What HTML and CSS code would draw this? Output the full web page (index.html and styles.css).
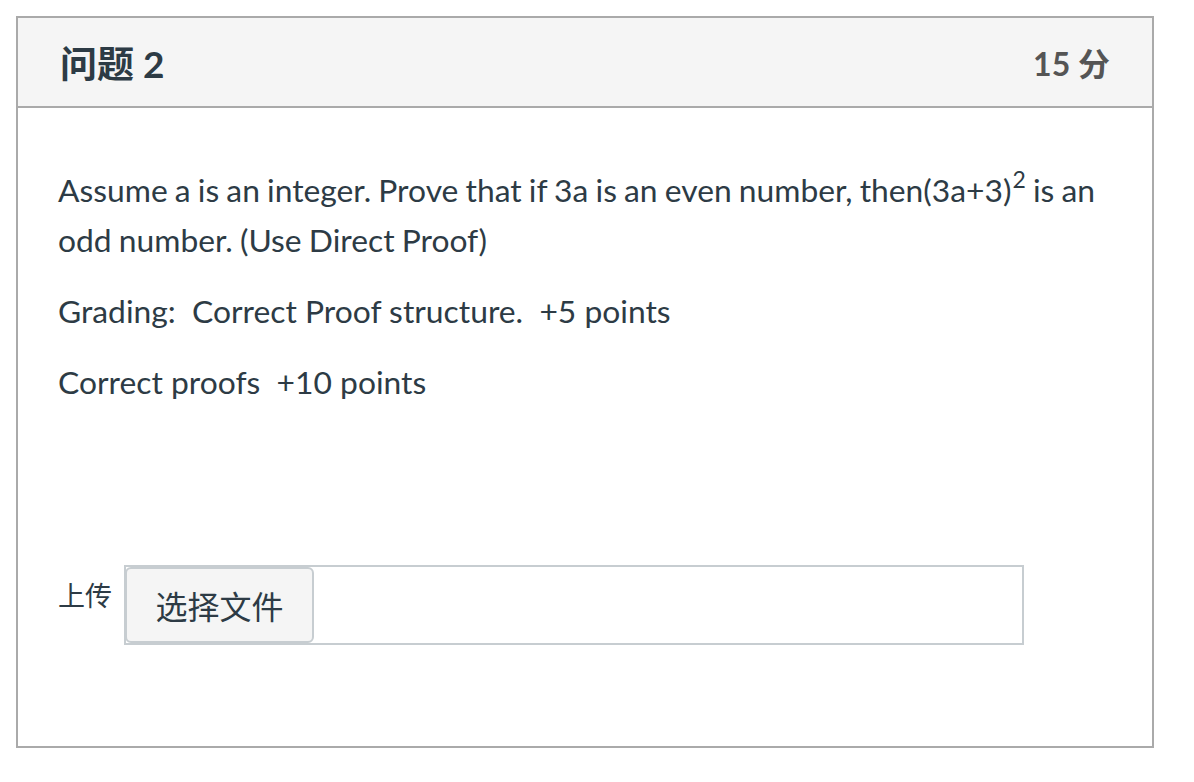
FILE: index.html
```html
<!DOCTYPE html>
<html lang="zh">
<head>
<meta charset="utf-8">
<link rel="stylesheet" href="styles.css">
</head>
<body>
<div class="card">
  <div class="header">
    <div class="title">问题 2</div>
    <div class="points">15 分</div>
  </div>
  <div class="content">
    <p class="tight">Assume a is an integer. Prove that if 3a is an even number, then(3a+3)<sup>2</sup> is an odd number. (Use Direct Proof)</p>
    <p>Grading:&nbsp; Correct Proof structure.&nbsp; +5 points</p>
    <p>Correct proofs&nbsp; +10 points</p>
    <div class="upload">
      <span class="label">上传</span>
      <div class="file">
        <span class="btn">选择文件</span>
      </div>
    </div>
  </div>
</div>
</body>
</html>
```
FILE: styles.css
```css
html, body {
  margin: 0;
  padding: 0;
  background: #fff;
}
body {
  font-family: Lato, "Noto Sans CJK SC", sans-serif;
  color: #2d3b45;
}
.card {
  margin: 16px 0 0 16px;
  width: 1138px;
  height: 732px;
  box-sizing: border-box;
  border: 2px solid #aaaaaa;
}
.header {
  height: 88px;
  background: #f5f5f5;
  border-bottom: 2px solid #aaaaaa;
  display: flex;
  align-items: center;
  justify-content: space-between;
  padding: 0 42px 0 42px;
}
.title {
  font-size: 37px;
  font-weight: 700;
  color: #2d3b45;
}
.points {
  font-size: 32px;
  font-weight: 700;
  color: #555555;
}
.content {
  padding: 57px 30px 0 40px;
}
.content p {
  margin: 0 0 21px 0;
  font-size: 31.8px;
  line-height: 50px;
}
.content p.tight {
  word-spacing: -1px;
}
.content sup {
  font-size: 23px;
  line-height: 0;
  vertical-align: 14px;
  margin-left: 1px;
}
.upload {
  display: flex;
  align-items: flex-start;
  margin-top: 158px;
}
.label {
  font-size: 27px;
  line-height: 30px;
  padding-top: 16px;
  width: 66px;
}
.file {
  width: 900px;
  height: 80px;
  box-sizing: border-box;
  border: 2px solid #c7cdd1;
  display: flex;
}
.btn {
  width: 189px;
  height: 76px;
  box-sizing: border-box;
  background: #f5f5f5;
  border: 2px solid #c7cdd1;
  border-radius: 6px;
  margin: 0 0 0 -1px;
  display: flex;
  align-items: center;
  justify-content: center;
  font-size: 32px;
  color: #2d3b45;
}
```
